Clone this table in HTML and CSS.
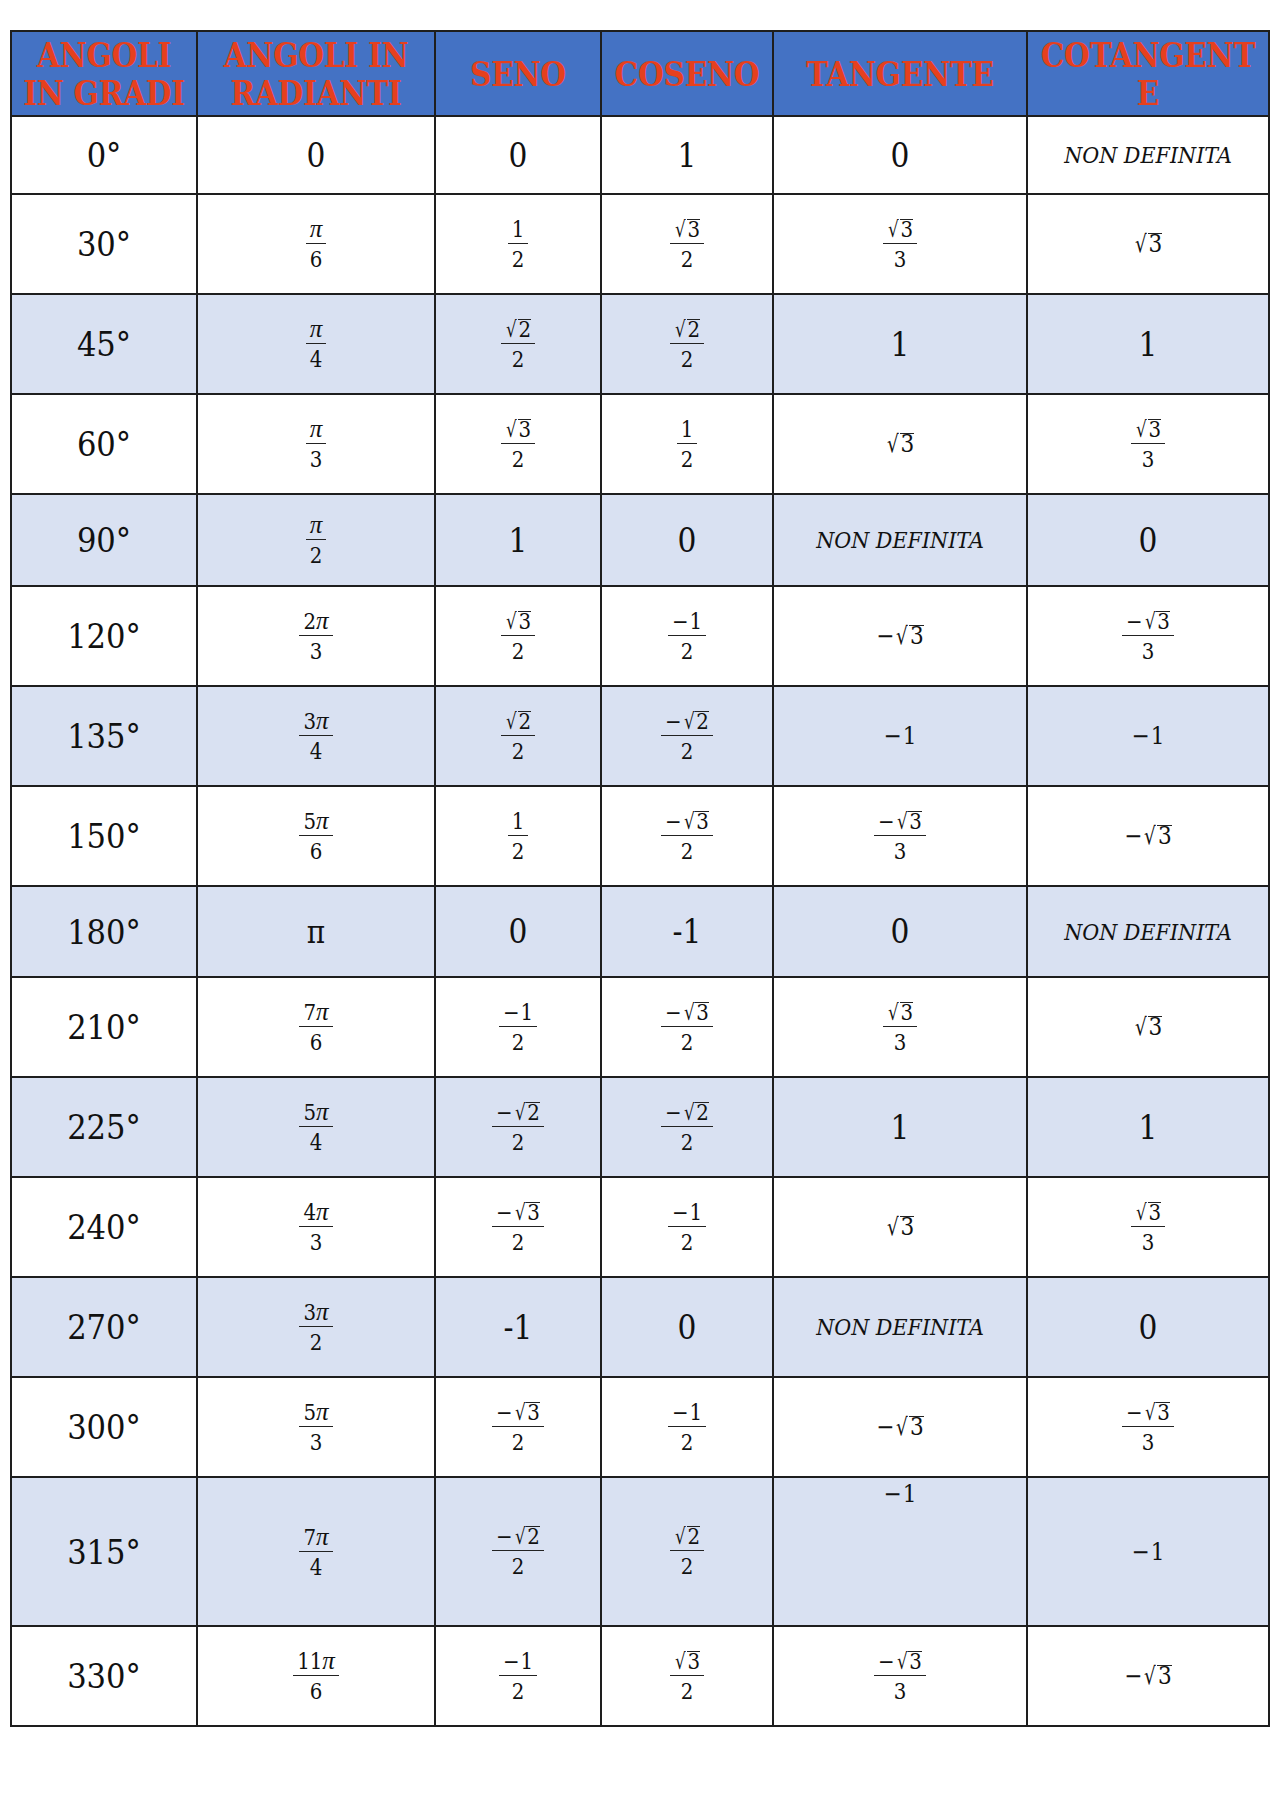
FILE: index.html
```html
<!DOCTYPE html>
<html lang="it">
<head>
<meta charset="utf-8">
<title>Tabella valori goniometrici</title>
<link rel="stylesheet" href="styles.css">
</head>
<body>
<div class="page">
<table class="trig">
<colgroup>
<col class="c1"><col class="c2"><col class="c3"><col class="c4"><col class="c5"><col class="c6">
</colgroup>
<thead>
<tr class="hd">
<th>ANGOLI<br>IN GRADI</th>
<th>ANGOLI IN<br>RADIANTI</th>
<th>SENO</th>
<th>COSENO</th>
<th>TANGENTE</th>
<th>COTANGENT<br>E</th>
</tr>
</thead>
<tbody>
<tr class="r78">
<td class="deg first">0°</td>
<td class="big first">0</td>
<td class="big first">0</td>
<td class="big first">1</td>
<td class="big first">0</td>
<td><span class="nd">NON DEFINITA</span></td>
</tr>
<tr class="r100">
<td class="deg">30°</td>
<td><span class="frac"><span class="num"><i>π</i></span><span class="den">6</span></span></td>
<td><span class="frac"><span class="num">1</span><span class="den">2</span></span></td>
<td><span class="frac"><span class="num"><span class="rs">√</span><span class="v">3</span></span><span class="den">2</span></span></td>
<td><span class="frac"><span class="num"><span class="rs">√</span><span class="v">3</span></span><span class="den">3</span></span></td>
<td><span class="sm"><span class="rs">√</span><span class="v">3</span></span></td>
</tr>
<tr class="r100 alt">
<td class="deg">45°</td>
<td><span class="frac"><span class="num"><i>π</i></span><span class="den">4</span></span></td>
<td><span class="frac"><span class="num"><span class="rs">√</span><span class="v">2</span></span><span class="den">2</span></span></td>
<td><span class="frac"><span class="num"><span class="rs">√</span><span class="v">2</span></span><span class="den">2</span></span></td>
<td class="big">1</td>
<td class="big">1</td>
</tr>
<tr class="r100">
<td class="deg">60°</td>
<td><span class="frac"><span class="num"><i>π</i></span><span class="den">3</span></span></td>
<td><span class="frac"><span class="num"><span class="rs">√</span><span class="v">3</span></span><span class="den">2</span></span></td>
<td><span class="frac"><span class="num">1</span><span class="den">2</span></span></td>
<td><span class="sm"><span class="rs">√</span><span class="v">3</span></span></td>
<td><span class="frac"><span class="num"><span class="rs">√</span><span class="v">3</span></span><span class="den">3</span></span></td>
</tr>
<tr class="r92 alt">
<td class="deg">90°</td>
<td><span class="frac"><span class="num"><i>π</i></span><span class="den">2</span></span></td>
<td class="big">1</td>
<td class="big">0</td>
<td><span class="nd">NON DEFINITA</span></td>
<td class="big">0</td>
</tr>
<tr class="r100">
<td class="deg">120°</td>
<td><span class="frac"><span class="num">2<i>π</i></span><span class="den">3</span></span></td>
<td><span class="frac"><span class="num"><span class="rs">√</span><span class="v">3</span></span><span class="den">2</span></span></td>
<td><span class="frac"><span class="num"><span class="mn">−</span>1</span><span class="den">2</span></span></td>
<td><span class="sm"><span class="mn">−</span><span class="rs">√</span><span class="v">3</span></span></td>
<td><span class="frac"><span class="num"><span class="mn">−</span><span class="rs">√</span><span class="v">3</span></span><span class="den">3</span></span></td>
</tr>
<tr class="r100 alt">
<td class="deg">135°</td>
<td><span class="frac"><span class="num">3<i>π</i></span><span class="den">4</span></span></td>
<td><span class="frac"><span class="num"><span class="rs">√</span><span class="v">2</span></span><span class="den">2</span></span></td>
<td><span class="frac"><span class="num"><span class="mn">−</span><span class="rs">√</span><span class="v">2</span></span><span class="den">2</span></span></td>
<td><span class="sm"><span class="mn">−</span>1</span></td>
<td><span class="sm"><span class="mn">−</span>1</span></td>
</tr>
<tr class="r100">
<td class="deg">150°</td>
<td><span class="frac"><span class="num">5<i>π</i></span><span class="den">6</span></span></td>
<td><span class="frac"><span class="num">1</span><span class="den">2</span></span></td>
<td><span class="frac"><span class="num"><span class="mn">−</span><span class="rs">√</span><span class="v">3</span></span><span class="den">2</span></span></td>
<td><span class="frac"><span class="num"><span class="mn">−</span><span class="rs">√</span><span class="v">3</span></span><span class="den">3</span></span></td>
<td><span class="sm"><span class="mn">−</span><span class="rs">√</span><span class="v">3</span></span></td>
</tr>
<tr class="r91 alt">
<td class="deg">180°</td>
<td class="pi">π</td>
<td class="big">0</td>
<td class="big">-1</td>
<td class="big">0</td>
<td><span class="nd">NON DEFINITA</span></td>
</tr>
<tr class="r100">
<td class="deg">210°</td>
<td><span class="frac"><span class="num">7<i>π</i></span><span class="den">6</span></span></td>
<td><span class="frac"><span class="num"><span class="mn">−</span>1</span><span class="den">2</span></span></td>
<td><span class="frac"><span class="num"><span class="mn">−</span><span class="rs">√</span><span class="v">3</span></span><span class="den">2</span></span></td>
<td><span class="frac"><span class="num"><span class="rs">√</span><span class="v">3</span></span><span class="den">3</span></span></td>
<td><span class="sm"><span class="rs">√</span><span class="v">3</span></span></td>
</tr>
<tr class="r100 alt">
<td class="deg">225°</td>
<td><span class="frac"><span class="num">5<i>π</i></span><span class="den">4</span></span></td>
<td><span class="frac"><span class="num"><span class="mn">−</span><span class="rs">√</span><span class="v">2</span></span><span class="den">2</span></span></td>
<td><span class="frac"><span class="num"><span class="mn">−</span><span class="rs">√</span><span class="v">2</span></span><span class="den">2</span></span></td>
<td class="big">1</td>
<td class="big">1</td>
</tr>
<tr class="r100">
<td class="deg">240°</td>
<td><span class="frac"><span class="num">4<i>π</i></span><span class="den">3</span></span></td>
<td><span class="frac"><span class="num"><span class="mn">−</span><span class="rs">√</span><span class="v">3</span></span><span class="den">2</span></span></td>
<td><span class="frac"><span class="num"><span class="mn">−</span>1</span><span class="den">2</span></span></td>
<td><span class="sm"><span class="rs">√</span><span class="v">3</span></span></td>
<td><span class="frac"><span class="num"><span class="rs">√</span><span class="v">3</span></span><span class="den">3</span></span></td>
</tr>
<tr class="r100 alt">
<td class="deg">270°</td>
<td><span class="frac"><span class="num">3<i>π</i></span><span class="den">2</span></span></td>
<td class="big">-1</td>
<td class="big">0</td>
<td><span class="nd">NON DEFINITA</span></td>
<td class="big">0</td>
</tr>
<tr class="r100">
<td class="deg">300°</td>
<td><span class="frac"><span class="num">5<i>π</i></span><span class="den">3</span></span></td>
<td><span class="frac"><span class="num"><span class="mn">−</span><span class="rs">√</span><span class="v">3</span></span><span class="den">2</span></span></td>
<td><span class="frac"><span class="num"><span class="mn">−</span>1</span><span class="den">2</span></span></td>
<td><span class="sm"><span class="mn">−</span><span class="rs">√</span><span class="v">3</span></span></td>
<td><span class="frac"><span class="num"><span class="mn">−</span><span class="rs">√</span><span class="v">3</span></span><span class="den">3</span></span></td>
</tr>
<tr class="r149 alt">
<td class="deg">315°</td>
<td><span class="frac"><span class="num">7<i>π</i></span><span class="den">4</span></span></td>
<td><span class="frac"><span class="num"><span class="mn">−</span><span class="rs">√</span><span class="v">2</span></span><span class="den">2</span></span></td>
<td><span class="frac"><span class="num"><span class="rs">√</span><span class="v">2</span></span><span class="den">2</span></span></td>
<td class="top"><span class="sm"><span class="mn">−</span>1</span></td>
<td><span class="sm"><span class="mn">−</span>1</span></td>
</tr>
<tr class="r100">
<td class="deg">330°</td>
<td><span class="frac"><span class="num">11<i>π</i></span><span class="den">6</span></span></td>
<td><span class="frac"><span class="num"><span class="mn">−</span>1</span><span class="den">2</span></span></td>
<td><span class="frac"><span class="num"><span class="rs">√</span><span class="v">3</span></span><span class="den">2</span></span></td>
<td><span class="frac"><span class="num"><span class="mn">−</span><span class="rs">√</span><span class="v">3</span></span><span class="den">3</span></span></td>
<td><span class="sm"><span class="mn">−</span><span class="rs">√</span><span class="v">3</span></span></td>
</tr>
</tbody>
</table>
</div>
</body>
</html>
```

FILE: styles.css
```css
html, body {
  margin: 0;
  padding: 0;
  background: #ffffff;
}

.page {
  padding: 30px 0 0 10px;
}

.trig {
  border-collapse: collapse;
  table-layout: fixed;
  width: 1258px;
}

.c1 { width: 186px; }
.c2 { width: 238px; }
.c3 { width: 166px; }
.c4 { width: 172px; }
.c5 { width: 254px; }
.c6 { width: 242px; }

.trig th,
.trig td {
  border: 2px solid #1e1e1e;
  text-align: center;
  vertical-align: middle;
  padding: 0;
}

.trig th {
  background: #4472c4;
  color: #e5401e;
  font-family: "DejaVu Serif Condensed", "DejaVu Serif", serif;
  font-stretch: condensed;
  font-weight: bold;
  font-size: 33px;
  line-height: 38px;
  letter-spacing: -0.3px;
  padding-top: 3px;
}

.hd { height: 85px; }
.r78 { height: 78px; }
.r91 { height: 91px; }
.r92 { height: 92px; }
.r100 { height: 100px; }
.r149 { height: 149px; }

.trig td {
  font-family: "DejaVu Serif Condensed", "DejaVu Serif", serif;
  font-stretch: condensed;
  color: #111111;
  background: #ffffff;
}

.trig tr.alt td {
  background: #d9e1f2;
}

.deg {
  font-size: 34px;
}

.big {
  font-size: 33px;
}

.pi {
  font-size: 31px;
}

.nd {
  font-style: italic;
  font-size: 23px;
}

.sm {
  font-size: 24px;
  white-space: nowrap;
}

.frac {
  display: inline-flex;
  flex-direction: column;
  align-items: center;
  vertical-align: middle;
  font-size: 22px;
  line-height: 25px;
  white-space: nowrap;
}

.frac .num {
  border-bottom: 1.5px solid #222222;
  padding: 0 4px 1px;
}

.frac .den {
  padding-top: 3px;
}

.frac i {
  font-family: "Liberation Serif", "DejaVu Serif", serif;
  font-size: 25px;
  margin-left: 3px;
}

.frac .num i:first-child {
  margin-left: 0;
}

.mn {
  margin-right: 1px;
}

.rs {
  display: inline-block;
  transform: scaleX(0.85);
}

.v {
  display: inline-block;
  line-height: 0.82;
  border-top: 1.3px solid #222222;
  padding: 1px 0 0 1px;
}

.trig td.top {
  vertical-align: top;
  padding-top: 2px;
}
```
